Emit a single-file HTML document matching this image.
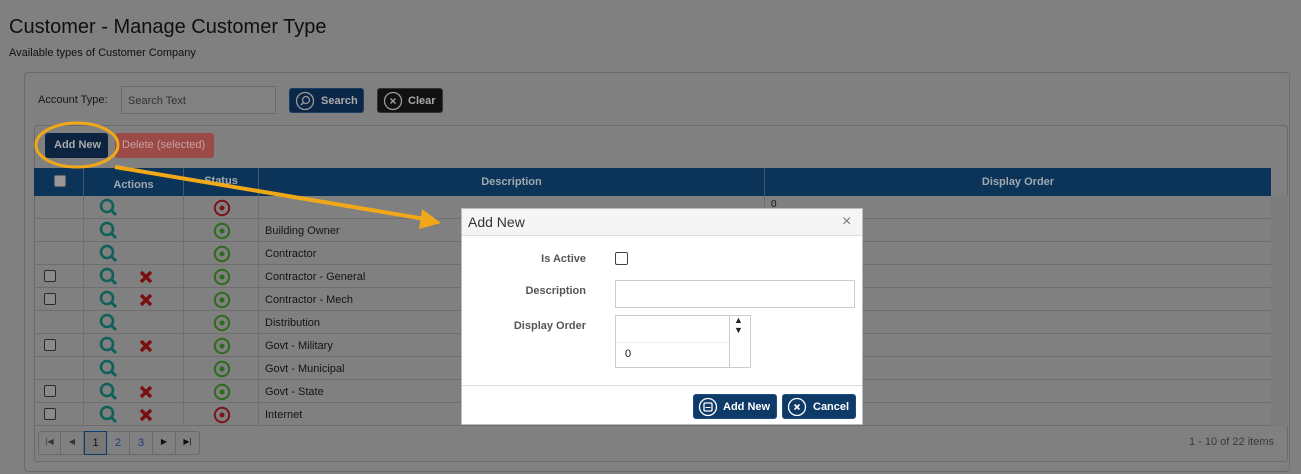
<!DOCTYPE html>
<html><head><style>
*{box-sizing:border-box}
body{margin:0;width:1301px;height:474px;background:#808080;font-family:"Liberation Sans",sans-serif;position:relative;overflow:hidden;color:#111}
.a{position:absolute}
.row{position:absolute;left:34px;width:1237px;height:23px;border-bottom:1px solid #6e6e6e;font-size:11px;color:#141414}
.c{position:absolute;top:0;height:23px;border-right:1px solid #6e6e6e}
.cb{position:absolute;width:12px;height:12px;border:1px solid #2a2a2a;border-radius:2px;background:#8a8a8a}
</style></head><body>
<div class="a" style="left:9px;top:16px;font-size:20px;color:#0f0f0f">Customer - Manage Customer Type</div>
<div class="a" style="left:9px;top:47px;font-size:11px;color:#0f0f0f">Available types of Customer Company</div>
<div class="a" style="left:24px;top:72px;width:1266px;height:400px;border:1px solid #6a6a6a;border-radius:4px;background:#808080"></div>
<div class="a" style="left:38px;top:94px;font-size:11px;color:#161616">Account Type:</div>
<div class="a" style="left:121px;top:86px;width:155px;height:28px;border:1px solid #6a6a6a;background:#818181;font-size:11px;color:#333;padding:8px 6px">Search Text</div>
<div class="a" style="left:289px;top:88px;width:75px;height:25px;background:#0b2747;border:1px solid #1a3d66;border-radius:3px;color:#aaa;font-size:11px;font-weight:bold;padding:6px 0 0 31px">Search</div>
<svg class="a" style="left:295px;top:91px" width="20" height="20"><circle cx="10" cy="10" r="8.5" fill="none" stroke="#999" stroke-width="1.3"/><circle cx="11" cy="9" r="3.5" fill="none" stroke="#999" stroke-width="1.3"/><line x1="8.5" y1="11.5" x2="6" y2="14" stroke="#999" stroke-width="1.5"/></svg>
<div class="a" style="left:377px;top:88px;width:66px;height:25px;background:#111;border:1px solid #333;border-radius:3px;color:#aaa;font-size:11px;font-weight:bold;padding:6px 0 0 30px">Clear</div>
<svg class="a" style="left:383px;top:91px" width="20" height="20"><circle cx="10" cy="10" r="8.5" fill="none" stroke="#999" stroke-width="1.3"/><path d="M7.5 7.5l5 5M12.5 7.5l-5 5" stroke="#999" stroke-width="1.5"/></svg>
<div class="a" style="left:34px;top:125px;width:1254px;height:337px;border:1px solid #6a6a6a;border-radius:3px"></div>
<div class="a" style="left:45px;top:133px;width:63px;height:25px;background:#0d2440;border-radius:3px;color:#aaa;font-size:11px;font-weight:bold;padding:6px 0 0 9px">Add New</div>
<div class="a" style="left:115px;top:133px;width:99px;height:25px;background:#9c4a48;border-radius:3px;color:#c7a0a0;font-size:11px;padding:6px 0 0 7px">Delete (selected)</div>
<div class="a" style="left:34px;top:168px;width:1237px;height:28px;background:#0b3458"></div>
<div class="a" style="left:34px;top:168px;width:1237px;height:28px;font-size:11px;font-weight:bold;color:#a0a8b0">
<div class="c" style="left:0;width:50px;height:28px;border-color:#3a5a78"><div class="cb" style="left:20px;top:7px;background:#999;border-color:#666"></div></div>
<div class="c" style="left:50px;width:100px;height:28px;border-color:#3a5a78;text-align:center;padding-top:11px">Actions</div>
<div class="c" style="left:150px;width:75px;height:28px;border-color:#3a5a78;text-align:center;padding-top:7px">Status</div>
<div class="c" style="left:225px;width:506px;height:28px;border-color:#3a5a78;text-align:center;padding-top:8px">Description</div>
<div class="c" style="left:731px;width:506px;height:28px;border:0;text-align:center;padding-top:8px">Display Order</div>
</div>
<div class="a" style="left:1271px;top:196px;width:17px;height:230px;background:#7c7c7c"></div>
<div id="rows"></div>
<script>
var d=[["",0,0],["Building Owner",0,1],["Contractor",0,1],["Contractor - General",1,1],["Contractor - Mech",1,1],["Distribution",0,1],["Govt - Military",1,1],["Govt - Municipal",0,1],["Govt - State",1,1],["Internet",1,0]];
var h="";
d.forEach(function(r,i){var y=196+i*23;var col=r[2]?"#2c6b1c":"#7a1515";
h+='<div class="row" style="top:'+y+'px">'+
'<div class="c" style="left:0;width:50px">'+(r[1]?'<div class="cb" style="left:10px;top:5px"></div>':'')+'</div>'+
'<div class="c" style="left:50px;width:100px"><svg style="position:absolute;left:15px;top:2px" width="20" height="20"><circle cx="8" cy="8" r="6" fill="none" stroke="#10605a" stroke-width="2.6"/><line x1="12" y1="12" x2="17" y2="17" stroke="#10605a" stroke-width="3"/></svg>'+(r[1]?'<svg style="position:absolute;left:55px;top:5px" width="14" height="14"><path d="M2 2l10 10M12 2L2 12" stroke="#7a0f0f" stroke-width="3.4"/></svg>':'')+'</div>'+
'<div class="c" style="left:150px;width:75px"><svg style="position:absolute;left:29px;top:3px" width="18" height="18"><circle cx="9" cy="9" r="7.2" fill="none" stroke="'+col+'" stroke-width="2"/><circle cx="9" cy="9" r="2.5" fill="'+col+'"/></svg></div>'+
'<div class="c" style="left:225px;width:506px;padding:6px 6px">'+r[0]+'</div>'+
'<div class="c" style="left:731px;width:506px;border:0;padding:3px 6px;font-size:10px">'+(i==0?'0':'')+'</div></div>';});
document.getElementById('rows').innerHTML=h;
</script>
<div class="a" style="left:38px;top:431px;width:162px;height:24px;border:1px solid #6a6a6a;border-radius:3px;font-size:11px">
<div class="a" style="left:0;width:22px;height:22px;border-right:1px solid #6a6a6a;text-align:center;padding-top:5px;color:#333;font-size:8px">|◀</div>
<div class="a" style="left:22px;width:23px;height:22px;border-right:1px solid #6a6a6a;text-align:center;padding-top:5px;color:#333;font-size:8px">◀</div>
<div class="a" style="left:45px;top:-1px;width:23px;height:24px;border:1px solid #0d3b6e;background:#777;text-align:center;padding-top:5px;color:#111">1</div>
<div class="a" style="left:68px;width:23px;height:22px;border-right:1px solid #6a6a6a;text-align:center;padding-top:5px;color:#1a3d80">2</div>
<div class="a" style="left:91px;width:23px;height:22px;border-right:1px solid #6a6a6a;text-align:center;padding-top:5px;color:#1a3d80">3</div>
<div class="a" style="left:114px;width:23px;height:22px;border-right:1px solid #6a6a6a;text-align:center;padding-top:5px;color:#111;font-size:8px">▶</div>
<div class="a" style="left:137px;width:23px;height:22px;text-align:center;padding-top:5px;color:#111;font-size:8px">▶|</div>
</div>
<div class="a" style="left:1189px;top:436px;font-size:11px;color:#3a3a3a">1 - 10 of 22 items</div>
<svg class="a" style="left:0;top:0" width="1301" height="474">
<ellipse cx="77" cy="145" rx="41" ry="22" fill="none" stroke="#f0a818" stroke-width="3"/>
<line x1="115" y1="167" x2="425" y2="219" stroke="#f0a818" stroke-width="4"/>
<path d="M422 209 L441 223 L419 229 Z" fill="#f0a818"/>
</svg>
<div class="a" style="left:461px;top:208px;width:402px;height:217px;background:#fff;border:1px solid #bbb">
<div class="a" style="left:0;top:0;width:400px;height:27px;background:#f5f5f5;border-bottom:1px solid #ddd;font-size:14px;color:#333;padding:5px 6px">Add New</div>
<div class="a" style="left:380px;top:4px;font-size:16px;color:#777">×</div>
<div class="a" style="left:0;top:44px;width:124px;text-align:right;font-size:11px;font-weight:bold;color:#555">Is Active</div>
<div class="a" style="left:153px;top:43px;width:13px;height:13px;border:1px solid #444;border-radius:2px"></div>
<div class="a" style="left:0;top:76px;width:124px;text-align:right;font-size:11px;font-weight:bold;color:#555">Description</div>
<div class="a" style="left:153px;top:71px;width:240px;height:28px;border:1px solid #ccc"></div>
<div class="a" style="left:0;top:111px;width:124px;text-align:right;font-size:11px;font-weight:bold;color:#555">Display Order</div>
<div class="a" style="left:153px;top:106px;width:136px;height:53px;border:1px solid #ccc">
<div class="a" style="left:0;top:26px;width:113px;border-top:1px solid #eee"></div>
<div class="a" style="left:113px;top:0;height:51px;border-left:1px solid #ccc"></div>
<div class="a" style="left:118px;top:-1px;font-size:9px;line-height:10px;color:#222">▲<br>▼</div>
<div class="a" style="left:9px;top:32px;font-size:11px;color:#111">0</div>
</div>
<div class="a" style="left:0;top:176px;width:400px;border-top:1px solid #ddd"></div>
<div class="a" style="left:231px;top:185px;width:84px;height:25px;background:#0d3a66;border:1px solid #1c4d80;border-radius:3px;color:#fff;font-size:11px;font-weight:bold;padding:6px 0 0 29px">Add New</div>
<svg class="a" style="left:236px;top:188px" width="20" height="20"><circle cx="10" cy="10" r="8.5" fill="none" stroke="#fff" stroke-width="1.3"/><rect x="6" y="6" width="8" height="8" rx="1" fill="none" stroke="#fff" stroke-width="1.3"/><line x1="7.5" y1="10.5" x2="12.5" y2="10.5" stroke="#fff"/></svg>
<div class="a" style="left:320px;top:185px;width:74px;height:25px;background:#0d3a66;border:1px solid #1c4d80;border-radius:3px;color:#fff;font-size:11px;font-weight:bold;padding:6px 0 0 30px">Cancel</div>
<svg class="a" style="left:325px;top:188px" width="20" height="20"><circle cx="10" cy="10" r="8.5" fill="none" stroke="#fff" stroke-width="1.3"/><path d="M7.5 7.5l5 5M12.5 7.5l-5 5" stroke="#fff" stroke-width="1.6"/></svg>
</div>
</body></html>
